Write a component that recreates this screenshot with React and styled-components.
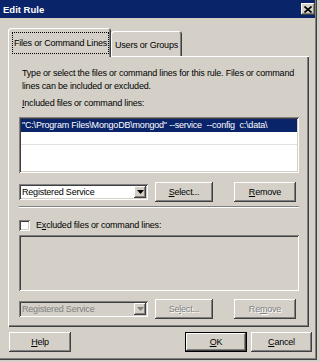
import React from 'react';
import styled, { createGlobalStyle, css } from 'styled-components';

const face = '#d4d0c8';

const Global = createGlobalStyle`
  html, body { margin: 0; padding: 0; background: ${face}; }
  body {
    font-family: "Liberation Sans", Arial, sans-serif;
    font-size: 9px;
    letter-spacing: -0.2px;
    color: #000;
  }
  * { box-sizing: border-box; }
`;

const raised = css`
  background: ${face};
  box-shadow: inset -1px -1px #404040, inset 1px 1px #ffffff,
    inset -2px -2px #808080, inset 2px 2px ${face};
`;

const sunken = css`
  box-shadow: inset 1px 1px #808080, inset -1px -1px #ffffff,
    inset 2px 2px #404040, inset -2px -2px ${face};
`;

const Window = styled.div`
  width: 317px;
  height: 360px;
  background: ${face};
  box-shadow: inset -1px -1px #404040, inset -2px -2px #808080;
  padding-right: 2px;
  display: flex;
  flex-direction: column;
`;

const TitleBar = styled.div`
  height: 18px;
  background: #0a246a;
  color: #fff;
  display: flex;
  align-items: center;
  justify-content: space-between;
  padding: 0 0 0 3px;
  font-weight: bold;
  font-size: 9.5px;
  letter-spacing: 0;
`;

const CloseBtn = styled.div`
  width: 14px;
  height: 12px;
  ${raised};
  display: flex;
  align-items: center;
  justify-content: center;
`;

const Content = styled.div`
  padding: 10px 0 0 8px;
  display: flex;
  flex-direction: column;
`;

const TabStrip = styled.div`
  display: flex;
  align-items: flex-end;
  height: 28px;
  position: relative;
  z-index: 1;
`;

const Tab = styled.div`
  background: ${face};
  border-radius: 3px 3px 0 0;
  box-shadow: inset 1px 1px #ffffff, inset -1px 0 #404040, inset -2px 0 #808080;
  display: flex;
  align-items: center;
  justify-content: center;
  white-space: nowrap;
  ${(p) =>
    p.$active
      ? css`
          width: 103px;
          height: 29px;
          margin-bottom: -1px;
          padding: 4px 2px 3px 4px;
        `
      : css`
          width: 71px;
          height: 25px;
          padding-top: 2px;
        `}
`;

const FocusRect = styled.span`
  flex: 1;
  align-self: stretch;
  border: 1px dotted #000;
  display: flex;
  align-items: center;
  justify-content: center;
`;

const Panel = styled.div`
  width: 301px;
  height: 271px;
  background: ${face};
  box-shadow: inset 1px 1px #ffffff, inset -1px -1px #404040, inset -2px -2px #808080;
  padding: 11px 10px 0 11px;
  display: flex;
  flex-direction: column;
`;

const Hint = styled.p`
  margin: 0 0 0 3px;
  line-height: 13px;
  white-space: nowrap;
`;

const FieldLabel = styled.div`
  margin: ${(p) => p.$mt || 0}px 0 0 ${(p) => p.$ml || 0}px;
  line-height: 13px;
  white-space: nowrap;
  color: ${(p) => (p.$disabled ? '#808080' : '#000')};
`;

const Key = styled.span`
  text-decoration: underline;
`;

const Box = styled.div`
  width: 280px;
  height: 56px;
  margin-top: ${(p) => p.$mt}px;
  padding: 2px;
  background: ${(p) => (p.$disabled ? face : '#fff')};
  ${sunken};
  display: flex;
  flex-direction: column;
`;

const ListRow = styled.div`
  height: 13px;
  line-height: 13px;
  padding-left: 1px;
  white-space: nowrap;
  background: ${(p) => (p.$selected ? '#0a246a' : 'transparent')};
  color: ${(p) => (p.$selected ? '#fff' : '#000')};
  border-bottom: ${(p) => (p.$rule ? '1px solid #e2e2e2' : 'none')};
`;

const ControlRow = styled.div`
  width: 280px;
  height: 20px;
  margin-top: ${(p) => p.$mt}px;
  display: flex;
  align-items: center;
`;

const Combo = styled.div`
  width: 129px;
  height: 16px;
  padding: 2px;
  background: ${(p) => (p.$disabled ? face : '#fff')};
  color: ${(p) => (p.$disabled ? '#808080' : '#000')};
  ${sunken};
  display: flex;
  align-items: center;
  white-space: nowrap;
`;

const ComboText = styled.span`
  flex: 1;
  padding-left: 1px;
  line-height: 12px;
`;

const DropBtn = styled.div`
  width: 12px;
  height: 12px;
  ${raised};
  display: flex;
  align-items: center;
  justify-content: center;
`;

const Button = styled.div`
  width: ${(p) => p.$w}px;
  height: 20px;
  ${raised};
  ${(p) =>
    p.$default &&
    css`
      border: 1px solid #000;
    `}
  display: flex;
  align-items: center;
  justify-content: center;
  white-space: nowrap;
  margin-left: ${(p) => (p.$ml === 'auto' ? 'auto' : `${p.$ml || 0}px`)};
  margin-right: ${(p) => p.$mr || 0}px;
  color: ${(p) => (p.$disabled ? '#808080' : '#000')};
  text-shadow: ${(p) => (p.$disabled ? '1px 1px #fff' : 'none')};
`;

const Separator = styled.div`
  width: 280px;
  height: 2px;
  margin-top: 4px;
  border-top: 1px solid #808080;
  border-bottom: 1px solid #ffffff;
`;

const CheckRow = styled.div`
  margin-top: 11px;
  height: 13px;
  display: flex;
  align-items: center;
`;

const CheckBox = styled.div`
  width: 11px;
  height: 11px;
  background: #fff;
  ${sunken};
`;

const BottomRow = styled.div`
  margin-top: 5px;
  padding-left: 1px;
  padding-right: 3px;
  display: flex;
  align-items: center;
  gap: 4px;
`;

const Arrow = ({ color = '#000' }) => (
  <svg width="7" height="4" viewBox="0 0 7 4">
    <path d="M0 0h7L3.5 4z" fill={color} />
  </svg>
);

export default function App() {
  return (
    <>
      <Global />
      <Window>
        <TitleBar>
          <span>Edit Rule</span>
          <CloseBtn>
            <svg width="8" height="7" viewBox="0 0 8 7">
              <path d="M0.5 0.5L7.5 6.5M7.5 0.5L0.5 6.5" stroke="#000" strokeWidth="1.6" />
            </svg>
          </CloseBtn>
        </TitleBar>
        <Content>
          <TabStrip>
            <Tab $active>
              <FocusRect>Files or Command Lines</FocusRect>
            </Tab>
            <Tab>Users or Groups</Tab>
          </TabStrip>
          <Panel>
            <Hint>
              Type or select the files or command lines for this rule. Files or command
              <br />
              lines can be included or excluded.
            </Hint>
            <FieldLabel $mt={4} $ml={3}>
              <Key>I</Key>ncluded files or command lines:
            </FieldLabel>
            <Box $mt={7}>
              <ListRow $selected>
                "C:\Program Files\MongoDB\mongod" --service&nbsp; --config&nbsp; c:\data\
              </ListRow>
              <ListRow $rule />
            </Box>
            <ControlRow $mt={9}>
              <Combo>
                <ComboText>Registered Service</ComboText>
                <DropBtn>
                  <Arrow />
                </DropBtn>
              </Combo>
              <Button $w={58} $ml={7}>
                <Key>S</Key>elect...
              </Button>
              <Button $w={62} $ml="auto" $mr={3}>
                <Key>R</Key>emove
              </Button>
            </ControlRow>
            <Separator />
            <CheckRow>
              <CheckBox />
              <FieldLabel $ml={6}>
                E<Key>x</Key>cluded files or command lines:
              </FieldLabel>
            </CheckRow>
            <Box $mt={3} $disabled />
            <ControlRow $mt={8}>
              <Combo $disabled>
                <ComboText>Registered Service</ComboText>
                <DropBtn>
                  <Arrow color="#808080" />
                </DropBtn>
              </Combo>
              <Button $w={58} $ml={7} $disabled>
                Se<Key>l</Key>ect...
              </Button>
              <Button $w={62} $ml="auto" $mr={3} $disabled>
                Re<Key>m</Key>ove
              </Button>
            </ControlRow>
          </Panel>
          <BottomRow>
            <Button $w={62}>
              <Key>H</Key>elp
            </Button>
            <Button $w={62} $ml="auto" $default>
              <Key>O</Key>K
            </Button>
            <Button $w={61}>
              <Key>C</Key>ancel
            </Button>
          </BottomRow>
        </Content>
      </Window>
    </>
  );
}
